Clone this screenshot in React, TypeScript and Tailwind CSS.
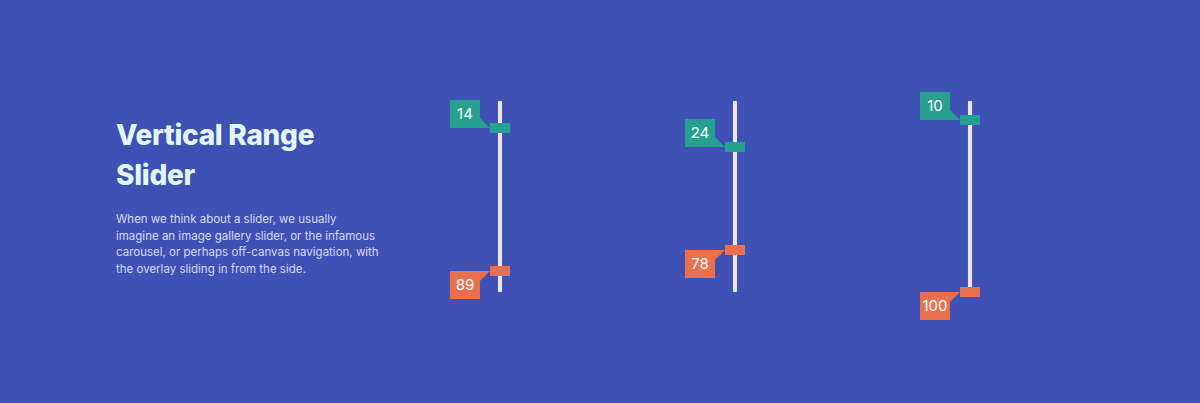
import React from "react";

type SliderProps = {
  min: number;
  max: number;
};

const TRACK_H = 191;

// thumb centre along the track for a 0–100 value
const pos = (v: number) => (v / 100) * TRACK_H;

function RangeSlider({ min, max }: SliderProps) {
  return (
    <div className="relative w-[60px] h-[191px] shrink-0">
      <div className="absolute left-[28px] top-0 w-[4px] h-full rounded-[1px] bg-[#ebe4ea] shadow-[0_0_0_0.5px_rgba(120,110,150,0.5)]" />

      {/* lower handle, label sits above-left */}
      <div
        className="absolute left-[20px] w-[20px] h-[10px] bg-[#26a08f]"
        style={{ top: pos(min) - 5 }}
      />
      <div
        className="absolute left-[-20px] w-[30px] h-[28px] bg-[#26a08f] flex items-center justify-center text-white text-[15px] font-['Inter',sans-serif]"
        style={{ top: pos(min) - 28 }}
      >
        {min}
        <span className="absolute right-[-10px] bottom-0 w-0 h-0 border-l-[10px] border-l-[#26a08f] border-t-[10px] border-t-transparent" />
      </div>

      {/* upper handle, label sits below-left */}
      <div
        className="absolute left-[20px] w-[20px] h-[10px] bg-[#e9704f]"
        style={{ top: pos(max) - 5 }}
      />
      <div
        className="absolute left-[-20px] w-[30px] h-[28px] bg-[#e9704f] flex items-center justify-center text-white text-[15px] font-['Inter',sans-serif]"
        style={{ top: pos(max) }}
      >
        {max}
        <span className="absolute right-[-10px] top-0 w-0 h-0 border-l-[10px] border-l-[#e9704f] border-b-[10px] border-b-transparent" />
      </div>
    </div>
  );
}

export default function App() {
  return (
    <div className="w-full h-[403px] bg-[#3f51b5] flex items-start pl-[116px] overflow-hidden">
      <div className="w-[270px] mt-[115px] shrink-0">
        <h1 className="text-[28px] leading-[40px] font-extrabold text-[#e3f6fb] font-['Inter',sans-serif] tracking-[-0.3px]">
          Vertical Range
          <br />
          Slider
        </h1>
        <p className="mt-[16px] text-[11.5px] leading-[16.7px] text-[#d6daf2] font-['Inter',sans-serif] whitespace-nowrap">
          When we think about a slider, we usually
          <br />
          imagine an image gallery slider, or the infamous
          <br />
          carousel, or perhaps off-canvas navigation, with
          <br />
          the overlay sliding in from the side.
        </p>
      </div>
      <div className="flex gap-[175px] ml-[84px] mt-[101px]">
        <RangeSlider min={14} max={89} />
        <RangeSlider min={24} max={78} />
        <RangeSlider min={10} max={100} />
      </div>
    </div>
  );
}
